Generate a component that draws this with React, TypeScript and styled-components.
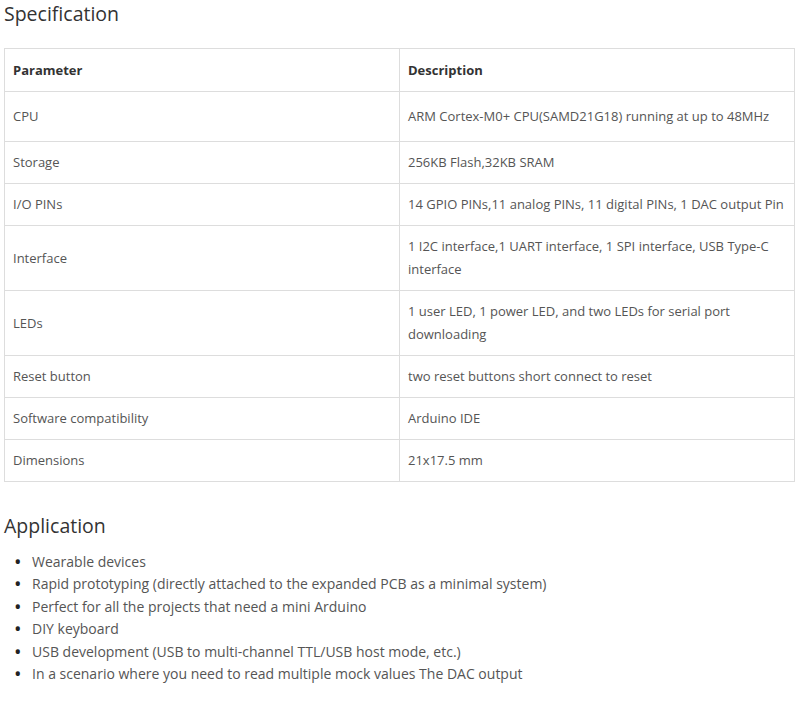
import React from 'react';
import styled, { createGlobalStyle } from 'styled-components';

const GlobalStyle = createGlobalStyle`
  body {
    margin: 0;
    background: #ffffff;
    font-family: "Open Sans", "Noto Sans", sans-serif;
    color: #555555;
  }
`;

const Page = styled.div`
  padding: 0 12px 0 4px;
`;

const Heading = styled.h2<{ $top: number }>`
  margin: 0;
  padding-top: ${(p) => p.$top}px;
  font-size: 19.5px;
  font-weight: 400;
  line-height: 28px;
  color: #333333;
`;

const Table = styled.table`
  width: 100%;
  margin-top: 20px;
  border-collapse: collapse;
  table-layout: fixed;
  font-size: 13px;
  line-height: 23px;
`;

const HeadCell = styled.th<{ $w?: string }>`
  width: ${(p) => p.$w || 'auto'};
  padding: 10px 8px 9px;
  border: 1px solid #dddddd;
  text-align: left;
  font-weight: 700;
  color: #333333;
`;

const Cell = styled.td<{ $tall?: boolean }>`
  padding: ${(p) => (p.$tall ? '13px 8px' : '9px 8px')};
  border: 1px solid #dddddd;
  vertical-align: middle;
  color: #555555;
`;

const List = styled.ul`
  margin: 11px 0 0;
  padding-left: 28px;
  list-style: none;
  font-size: 14px;
  line-height: 22.4px;
  color: #555555;
`;

const Item = styled.li`
  &::before {
    content: '•';
    display: inline-block;
    width: 18px;
    margin-left: -18px;
    font-size: 20px;
    line-height: 0;
    vertical-align: -2px;
    color: #222222;
  }
`;

const specs: [string, string, boolean?][] = [
  ['CPU', 'ARM Cortex-M0+ CPU(SAMD21G18) running at up to 48MHz', true],
  ['Storage', '256KB Flash,32KB SRAM'],
  ['I/O PINs', '14 GPIO PINs,11 analog PINs, 11 digital PINs, 1 DAC output Pin'],
  ['Interface', '1 I2C interface,1 UART interface, 1 SPI interface, USB Type-C interface'],
  ['LEDs', '1 user LED, 1 power LED, and two LEDs for serial port downloading'],
  ['Reset button', 'two reset buttons short connect to reset'],
  ['Software compatibility', 'Arduino IDE'],
  ['Dimensions', '21x17.5 mm'],
];

const uses = [
  'Wearable devices',
  'Rapid prototyping (directly attached to the expanded PCB as a minimal system)',
  'Perfect for all the projects that need a mini Arduino',
  'DIY keyboard',
  'USB development (USB to multi-channel TTL/USB host mode, etc.)',
  'In a scenario where you need to read multiple mock values The DAC output',
];

export default function App() {
  return (
    <>
      <GlobalStyle />
      <Page>
        <Heading $top={0}>Specification</Heading>
        <Table>
          <thead>
            <tr>
              <HeadCell $w="378px">Parameter</HeadCell>
              <HeadCell>Description</HeadCell>
            </tr>
          </thead>
          <tbody>
            {specs.map(([name, desc, tall]) => (
              <tr key={name}>
                <Cell $tall={tall}>{name}</Cell>
                <Cell $tall={tall}>{desc}</Cell>
              </tr>
            ))}
          </tbody>
        </Table>
        <Heading $top={30}>Application</Heading>
        <List>
          {uses.map((u) => (
            <Item key={u}>{u}</Item>
          ))}
        </List>
      </Page>
    </>
  );
}
